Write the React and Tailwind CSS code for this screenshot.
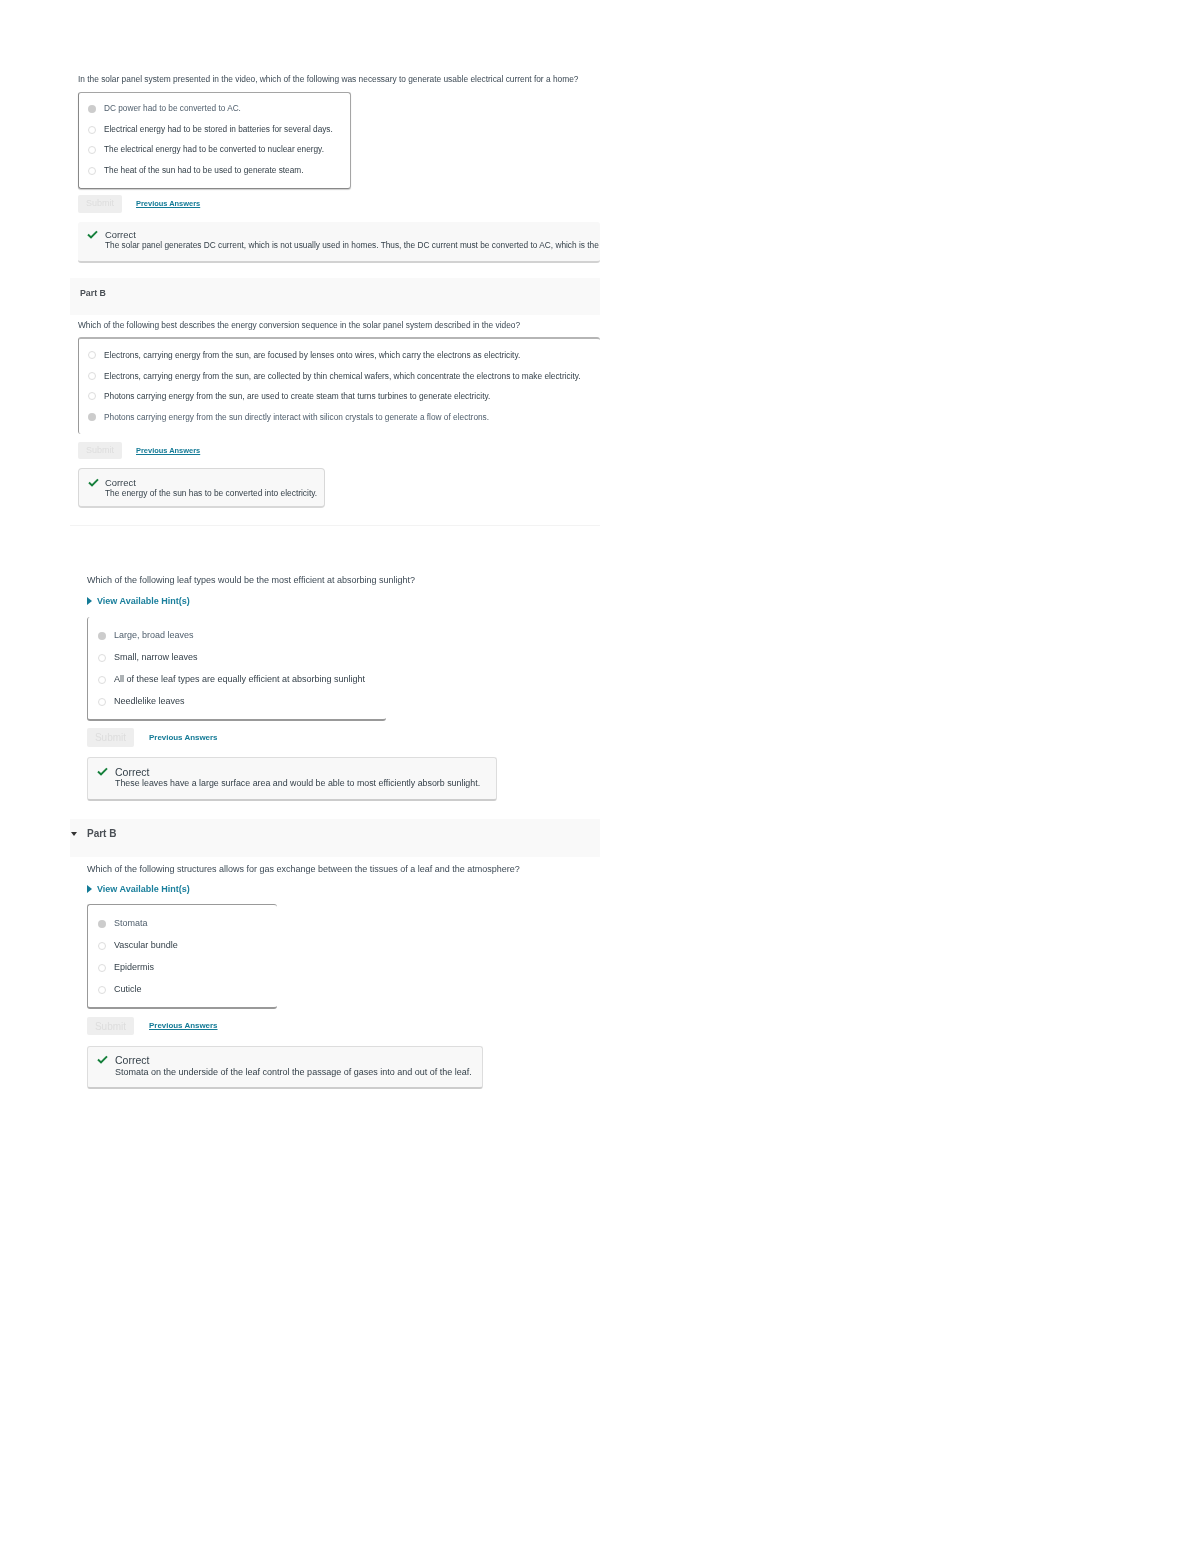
const FONT = "font-['Liberation_Sans',Arial,sans-serif]";

function Radio({ selected }) {
  return selected ? (
    <span className="w-[8px] h-[8px] rounded-full bg-[#cccccc] shrink-0" />
  ) : (
    <span className="w-[8px] h-[8px] rounded-full border border-[#dddddd] bg-white shrink-0" />
  );
}

function Options({ items, box, row, text, gap, selected }) {
  return (
    <div className={box}>
      {items.map((t, i) => (
        <div key={t} className={`flex items-center ${row} ${gap}`}>
          <Radio selected={i === selected} />
          <span className={`whitespace-nowrap ${text} ${i === selected ? "text-[#51606e]" : "text-[#333f48]"}`}>{t}</span>
        </div>
      ))}
    </div>
  );
}

function Check() {
  return (
    <svg width="11" height="9" viewBox="0 0 11 9" className="shrink-0">
      <path d="M1 4.6 L4 7.4 L10 1.4" fill="none" stroke="#16803c" strokeWidth="2" />
    </svg>
  );
}

function Submit({ cls }) {
  return <div className={`flex items-center justify-center rounded-[2px] bg-[#eeeeee] text-[#dddddd] ${cls}`}>Submit</div>;
}

function Feedback({ box, title, body, titleCls, bodyCls, gap }) {
  return (
    <div className={`flex bg-[#f8f8f8] overflow-hidden ${box} ${gap}`}>
      <div className="pt-[1px]"><Check /></div>
      <div className="min-w-0">
        <div className={`${titleCls} text-[#333f48]`}>{title}</div>
        <div className={`whitespace-nowrap ${bodyCls} text-[#333f48]`}>{body}</div>
      </div>
    </div>
  );
}

function Hint({ cls }) {
  return (
    <div className={`flex items-center gap-[5px] text-[#1a7f9c] font-bold ${cls}`}>
      <span className="w-0 h-0 border-y-[4px] border-y-transparent border-l-[5px] border-l-[#137a96]" />
      <span>View Available Hint(s)</span>
    </div>
  );
}

export default function App() {
  return (
    <div className={`w-[1200px] h-[1553px] bg-white overflow-hidden blur-[0.6px] ${FONT}`}>
      <div className="w-[530px] ml-[70px] pt-[74px]">
        {/* Solar Part A */}
        <div className="pl-[8px]">
          <p className="text-[8.35px] leading-[10px] text-[#3d4a55] whitespace-nowrap">In the solar panel system presented in the video, which of the following was necessary to generate usable electrical current for a home?</p>
          <Options
            box="w-[273px] h-[97px] mt-[8px] pt-[6px] pl-[9px] border border-[#a5a5a5] border-l-[#888888] border-b-[#888888] rounded-[3px] shadow-[0_1px_1px_#cccccc]"
            row="h-[20.5px]" gap="gap-[8px]" text="text-[8.27px]" selected={0}
            items={[
              "DC power had to be converted to AC.",
              "Electrical energy had to be stored in batteries for several days.",
              "The electrical energy had to be converted to nuclear energy.",
              "The heat of the sun had to be used to generate steam.",
            ]}
          />
          <div className="flex items-center gap-[14px] mt-[6px]">
            <Submit cls="w-[44px] h-[18px] text-[9px]" />
            <span className="text-[7.45px] font-bold underline text-[#137a96]">Previous Answers</span>
          </div>
          <Feedback
            box="w-[522px] h-[41px] mt-[9px] pt-[7px] pl-[9px] border-b-2 border-[#d2d2d2] rounded-[3px]" gap="gap-[7px]"
            titleCls="text-[9.4px] leading-[11px]" bodyCls="text-[8.3px] leading-[11px]"
            title="Correct"
            body="The solar panel generates DC current, which is not usually used in homes. Thus, the DC current must be converted to AC, which is the form of current used in homes."
          />
        </div>

        {/* Solar Part B */}
        <div className="h-[37px] mt-[15px] pl-[10px] pt-[9px] bg-[#f9f9f9] text-[8.8px] leading-[12px] font-bold text-[#4a4f55]">Part B</div>
        <div className="pl-[8px]">
          <p className="mt-[5px] text-[8.33px] leading-[10px] text-[#3d4a55] whitespace-nowrap">Which of the following best describes the energy conversion sequence in the solar panel system described in the video?</p>
          <Options
            box="w-[522px] h-[97px] mt-[7px] pt-[6px] pl-[9px] border-t-2 border-l border-[#b5b5b5] border-l-[#999999] rounded-[3px]"
            row="h-[20.5px]" gap="gap-[8px]" text="text-[8.3px]" selected={3}
            items={[
              "Electrons, carrying energy from the sun, are focused by lenses onto wires, which carry the electrons as electricity.",
              "Electrons, carrying energy from the sun, are collected by thin chemical wafers, which concentrate the electrons to make electricity.",
              "Photons carrying energy from the sun, are used to create steam that turns turbines to generate electricity.",
              "Photons carrying energy from the sun directly interact with silicon crystals to generate a flow of electrons.",
            ]}
          />
          <div className="flex items-center gap-[14px] mt-[8px]">
            <Submit cls="w-[44px] h-[17px] text-[9px]" />
            <span className="text-[7.45px] font-bold underline text-[#137a96]">Previous Answers</span>
          </div>
          <Feedback
            box="w-[247px] h-[40px] mt-[9px] pt-[8px] pl-[9px] border border-[#d8d8d8] border-b-2 rounded-[4px]" gap="gap-[6px]"
            titleCls="text-[9.4px] leading-[11px]" bodyCls="text-[8.4px] leading-[11px]"
            title="Correct"
            body="The energy of the sun has to be converted into electricity."
          />
        </div>
        <div className="h-px mt-[17px] bg-[#f3f3f3]" />

        {/* Leaf Part A */}
        <div className="pl-[17px]">
          <p className="mt-[48px] text-[9px] leading-[12px] text-[#3d4a55] whitespace-nowrap">Which of the following leaf types would be the most efficient at absorbing sunlight?</p>
          <Hint cls="mt-[9px] text-[9px] leading-[12px]" />
          <Options
            box="w-[299px] h-[104px] mt-[10px] pt-[8px] pl-[10px] border-l border-b-2 border-[#999999] rounded-[3px]"
            row="h-[22px]" gap="gap-[8px]" text="text-[9px]" selected={0}
            items={[
              "Large, broad leaves",
              "Small, narrow leaves",
              "All of these leaf types are equally efficient at absorbing sunlight",
              "Needlelike leaves",
            ]}
          />
          <div className="flex items-center gap-[15px] mt-[7px]">
            <Submit cls="w-[47px] h-[19px] text-[10px]" />
            <span className="text-[7.95px] font-bold text-[#137a96]">Previous Answers</span>
          </div>
          <Feedback
            box="w-[410px] h-[44px] mt-[10px] pt-[8px] pl-[9px] border border-[#dddddd] border-b-2 border-b-[#cccccc] rounded-[3px]" gap="gap-[7px]"
            titleCls="text-[10.5px] leading-[12px]" bodyCls="text-[8.85px] leading-[11px]"
            title="Correct"
            body="These leaves have a large surface area and would be able to most efficiently absorb sunlight."
          />
        </div>

        {/* Leaf Part B */}
        <div className="relative h-[38px] mt-[18px] pl-[17px] pt-[9px] bg-[#f9f9f9] text-[10px] leading-[12px] font-bold text-[#4a4f55]">
          <span className="absolute left-[1px] top-[13px] w-0 h-0 border-x-[3px] border-x-transparent border-t-[4px] border-t-[#333333]" />
          Part B
        </div>
        <div className="pl-[17px]">
          <p className="mt-[6px] text-[9px] leading-[12px] text-[#3d4a55] whitespace-nowrap">Which of the following structures allows for gas exchange between the tissues of a leaf and the atmosphere?</p>
          <Hint cls="mt-[8px] text-[9px] leading-[12px]" />
          <Options
            box="w-[190px] h-[105px] mt-[9px] pt-[8px] pl-[10px] border-t border-l border-b-2 border-[#999999] rounded-[3px]"
            row="h-[22px]" gap="gap-[8px]" text="text-[9px]" selected={0}
            items={["Stomata", "Vascular bundle", "Epidermis", "Cuticle"]}
          />
          <div className="flex items-center gap-[15px] mt-[8px]">
            <Submit cls="w-[47px] h-[18px] text-[10px]" />
            <span className="text-[7.95px] font-bold underline text-[#137a96]">Previous Answers</span>
          </div>
          <Feedback
            box="w-[396px] h-[43px] mt-[11px] pt-[7px] pl-[9px] border border-[#dddddd] border-b-2 border-b-[#cccccc] rounded-[3px]" gap="gap-[7px]"
            titleCls="text-[10.5px] leading-[13px] font-medium" bodyCls="text-[9px] leading-[11px]"
            title="Correct"
            body="Stomata on the underside of the leaf control the passage of gases into and out of the leaf."
          />
        </div>
      </div>
    </div>
  );
}
